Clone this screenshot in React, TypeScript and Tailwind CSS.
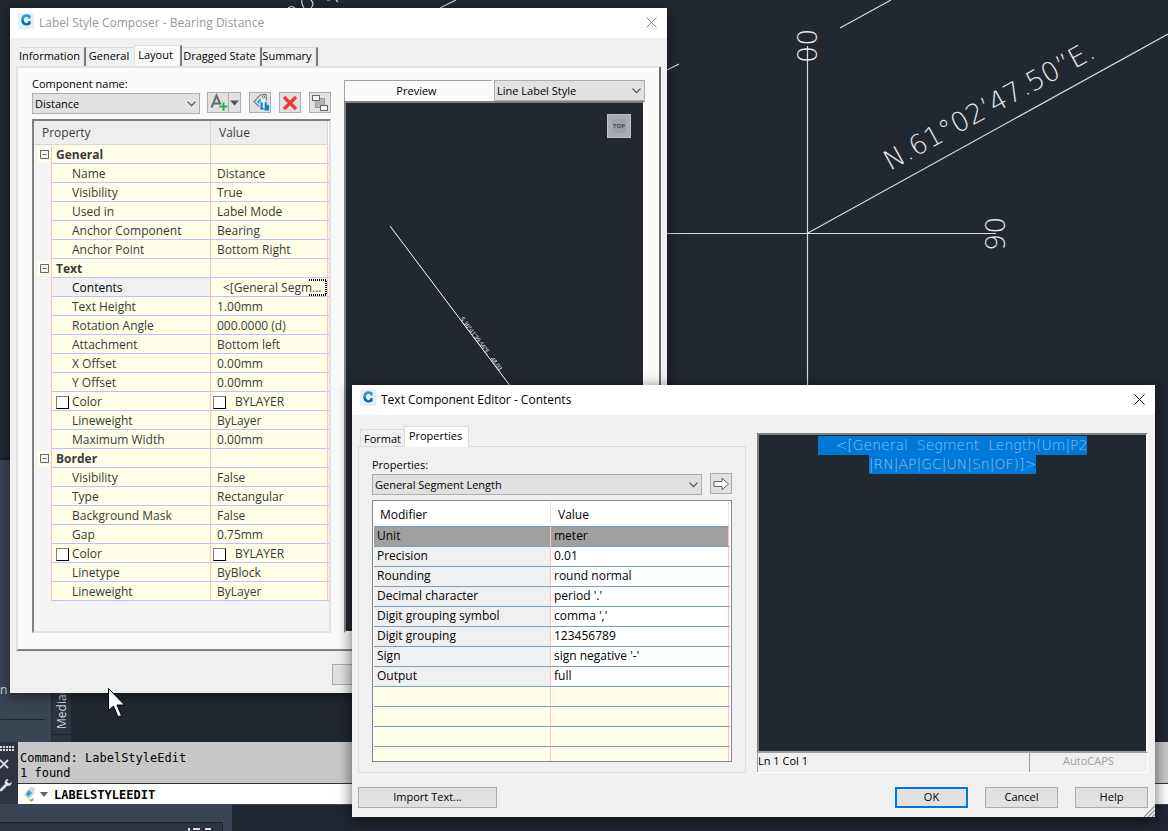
import React from 'react';

type Row = {
    name: string;
    value?: string;
    group?: boolean;
    swatch?: boolean;
    active?: boolean;
};

const styleRows: Row[] = [
    { name: 'General', group: true },
    { name: 'Name', value: 'Distance' },
    { name: 'Visibility', value: 'True' },
    { name: 'Used in', value: 'Label Mode' },
    { name: 'Anchor Component', value: 'Bearing' },
    { name: 'Anchor Point', value: 'Bottom Right' },
    { name: 'Text', group: true },
    { name: 'Contents', value: '<[General Segm...', active: true },
    { name: 'Text Height', value: '1.00mm' },
    { name: 'Rotation Angle', value: '000.0000 (d)' },
    { name: 'Attachment', value: 'Bottom left' },
    { name: 'X Offset', value: '0.00mm' },
    { name: 'Y Offset', value: '0.00mm' },
    { name: 'Color', value: 'BYLAYER', swatch: true },
    { name: 'Lineweight', value: 'ByLayer' },
    { name: 'Maximum Width', value: '0.00mm' },
    { name: 'Border', group: true },
    { name: 'Visibility', value: 'False' },
    { name: 'Type', value: 'Rectangular' },
    { name: 'Background Mask', value: 'False' },
    { name: 'Gap', value: '0.75mm' },
    { name: 'Color', value: 'BYLAYER', swatch: true },
    { name: 'Linetype', value: 'ByBlock' },
    { name: 'Lineweight', value: 'ByLayer' },
];

const modifiers = [
    ['Unit', 'meter'],
    ['Precision', '0.01'],
    ['Rounding', 'round normal'],
    ['Decimal character', "period '.'"],
    ['Digit grouping symbol', "comma ','"],
    ['Digit grouping', '123456789'],
    ['Sign', "sign negative '-'"],
    ['Output', 'full'],
];

const AppLogo = () => (
    <svg className="mb-1 size-4 shrink-0" viewBox="0 0 16 16" aria-hidden="true">
        <rect width="16" height="16" fill="#e3f1fb" />
        <path d="M11.3 5.500V3.300C9.300 2.200 4.600 1.600 4.600 7c0 4.600 4.400 4.900 6.700 3.400V8.300" fill="none" stroke="#2a94cf" strokeWidth="2.600" />
        <path d="M4.600 7.500c.2 4 4.400 4.400 6.700 2.900V8.300" fill="none" stroke="#126aa3" strokeWidth="2.200" />
    </svg>
);

const CloseIcon = ({ className }: { className: string }) => (
    <svg className={className} width="11" height="11" viewBox="0 0 11 11" aria-hidden="true">
        <path d="M.5.5l10 10M10.500.5l-10 10" stroke="currentColor" fill="none" />
    </svg>
);

const Swatch = () => (
    <span className="block size-[13px] shrink-0 border border-t-[#808080] border-l-[#808080] border-r-black border-b-black bg-white" />
);

const Select = ({ label, value, className }: { label: string; value: string; className: string }) => (
    <div className={`relative ${className}`}>
        <select
            id={label}
            aria-label={label}
            defaultValue={value}
            className="block h-[21px] w-full appearance-none border border-[#adadad] bg-[#e1e1e1] pl-[2px] text-[11px] leading-[19px] text-black"
        >
            <option>{value}</option>
        </select>
        <svg className="pointer-events-none absolute top-2 right-1" width="9" height="6" viewBox="0 0 9 6" aria-hidden="true">
            <path d="M.5.7l4 4 4-4" fill="none" stroke="#505050" strokeWidth="1.200" />
        </svg>
    </div>
);

const iconButton = 'flex h-[21px] items-center justify-center border border-[#adadad] bg-[#e1e1e1]';

const Toolbar = () => (
    <div className="-mt-px flex gap-2">
        <div className="flex">
            <button type="button" aria-label="Create text component" className={`${iconButton} w-[22px]`}>
                <svg className="shrink-0" width="19" height="19" viewBox="0 0 19 19">
                    <path d="M2.500 14.500L7.500 2.500l4 9M4.500 10.500h6" fill="none" stroke="#6a6a6a" strokeWidth="2" />
                    <path d="M14.500 9.500v8M10.500 13.500h8" stroke="#22b14c" strokeWidth="2" />
                </svg>
            </button>
            <button type="button" aria-label="More components" className={`${iconButton} w-3 border-l-0`}>
                <svg className="shrink-0" width="9" height="6" viewBox="0 0 9 6"><path d="M0 .5h9L4.500 5.500z" fill="#555" /></svg>
            </button>
        </div>
        <button type="button" aria-label="Copy component" className={`${iconButton} w-[22px]`}>
            <svg className="shrink-0" width="19" height="19" viewBox="0 0 19 19">
                <path d="M8.500 14L3 8.500 9.500 2l5.500-.5.5 6" fill="#f2f2f2" stroke="#777" strokeWidth="1.200" />
                <circle cx="12.500" cy="4" r="1.200" fill="none" stroke="#777" />
                <path d="M5.500 8.500L10 5v3l1.500 1.500H8.500v2z" fill="#3aa5ea" />
                <path d="M9 9h3v5.500h2V17H9z" fill="#1a86d8" stroke="#fff" strokeWidth=".6" />
                <path d="M13.500 8.500h2.500v3h2.500V18h-5.500z" fill="#1a7fd4" stroke="#fff" strokeWidth=".6" />
            </svg>
        </button>
        <button type="button" aria-label="Delete component" className={`${iconButton} w-[22px]`}>
            <svg className="shrink-0" width="16" height="16" viewBox="0 0 16 16">
                <path d="M2 2l12 12M14 2L2 14" stroke="#f23535" strokeWidth="3.200" />
            </svg>
        </button>
        <button type="button" aria-label="Component draw order" className={`${iconButton} w-[22px]`}>
            <svg className="shrink-0" width="18" height="18" viewBox="0 0 18 18">
                <path d="M4.500 4.500h9v9h-9z" fill="#b4b4b4" stroke="#999" />
                <rect x="1.500" y="1.500" width="7" height="5" fill="#f4f4f4" stroke="#666" />
                <rect x="9.500" y="11.500" width="7" height="5" fill="#f4f4f4" stroke="#666" />
            </svg>
        </button>
    </div>
);

const StyleTable = () => (
    <table className="w-full table-fixed border-separate border-spacing-0 text-left text-[12px] leading-4 text-[#3a3a3a]">
        <colgroup>
            <col className="w-[18px]" />
            <col className="w-[159px]" />
            <col />
            <col className="w-px" />
        </colgroup>
        <thead>
            <tr className="h-6 bg-[#eeeeee]">
                <th colSpan={2} className="border-r border-b border-[#d8d8d8] pl-2 font-normal">Property</th>
                <th className="border-r border-b border-[#d8d8d8] pl-2 font-normal">Value</th>
                <td className="bg-white p-0" />
            </tr>
        </thead>
        <tbody>
            {styleRows.map((row, i) => (
                <tr key={i} className="h-[19px]">
                    <td className="border-r border-[#ffc0c0] p-0 pl-1">
                        {row.group && (
                            <button type="button" aria-label={`Collapse ${row.name}`} className="flex h-[15px] w-[13px] items-center justify-center bg-[#ffffe8]">
                                <svg width="9" height="9" viewBox="0 0 9 9">
                                    <path d="M.5.5h8v8h-8zM2.500 4.500h4" fill="#f4f4f4" stroke="#666" />
                                </svg>
                            </button>
                        )}
                    </td>
                    <td className={`border-r border-b border-r-[#ffc0c0] border-b-[#c0c0ff] p-0 pt-[2px] pl-1 ${row.active ? 'bg-[#f0f0f0] text-black' : 'bg-[#ffffe8]'}`}>
                        <div className="flex items-center">
                            {row.swatch && <Swatch />}
                            <span className={row.group ? 'font-bold' : row.swatch ? 'pl-[3px]' : 'pl-4'}>{row.name}</span>
                        </div>
                    </td>
                    <td className="border-r border-b border-r-[#ffc0c0] border-b-[#c0c0ff] bg-[#ffffe8] p-0 pt-[2px]">
                        <div className="relative flex items-center">
                            {row.swatch && <span className="pl-[2px]"><Swatch /></span>}
                            <span className={row.swatch ? 'pl-[9px]' : row.active ? 'pl-3 whitespace-nowrap' : 'pl-[6px]'}>{row.value}</span>
                            {row.active && (
                                <button type="button" aria-label="Edit contents" className="absolute -top-px right-0 h-[17px] w-[18px]">
                                    <svg className="block" width="18" height="17" viewBox="0 0 18 17">
                                        <path d="M0 1h17v15H0" fill="none" stroke="#000" strokeWidth="2" strokeDasharray="1 1" />
                                    </svg>
                                </button>
                            )}
                        </div>
                    </td>
                    <td className="border-b border-[#c0c0ff] bg-[#f4f4f4] p-0" />
                </tr>
            ))}
        </tbody>
    </table>
);

const ComposerWindow = () => (
    <section aria-label="Label Style Composer" className="absolute top-2 left-[10px] flex w-[657px] flex-col bg-[#f0f0f0] pb-2 shadow-[0_3px_12px_rgba(0,0,0,0.5)]">
        <header className="flex h-[30px] items-center bg-white pr-[10px] pl-2 text-[12px] text-[#999999]">
            <AppLogo />
            <h1 className="flex-1 pl-[5px]">Label Style Composer - Bearing Distance</h1>
            <button type="button" aria-label="Close composer" className="mb-[2px]"><CloseIcon className="text-[#888888]" /></button>
        </header>

        <div className="px-[6px] pt-[7px] text-[11px] text-black">
            <div role="tablist" className="flex h-[21px] items-end pl-[3px] leading-4">
                <button type="button" role="tab" className="h-[19px] w-[67px] border-t border-r-2 border-t-[#dcdcdc] border-r-[#777777] pr-[6px] pb-[2px]">Information</button>
                <button type="button" role="tab" className="h-[19px] w-[48px] border-t border-[#dcdcdc] pr-[2px] pb-[2px]">General</button>
                <button type="button" role="tab" aria-selected="true" className="h-[21px] w-[48px] border-t border-r-2 border-l border-t-[#dcdcdc] border-r-[#777777] border-l-[#dcdcdc] bg-[#fafafa] pr-1 pb-[2px]">Layout</button>
                <button type="button" role="tab" className="h-[19px] w-[80px] border-t border-r-2 border-t-[#dcdcdc] border-r-[#777777] pr-[3px] pb-[2px]">Dragged State</button>
                <button type="button" role="tab" className="h-[19px] w-[56px] border-t border-r-2 border-t-[#dcdcdc] border-r-[#777777] pr-1 pb-[2px]">Summary</button>
            </div>

            <div className="flex gap-[13px] border-2 border-t-[#e3e3e3] border-r-[#696969] border-b-[#808080] border-l-[#e3e3e3] bg-[#fafafa] px-[14px] pt-2 pb-4">
                <div className="w-[299px]">
                    <label htmlFor="Component name" className="block pb-[2px] leading-[15px]">Component name:</label>
                    <div className="flex gap-[7px]">
                        <Select label="Component name" value="Distance" className="w-[168px]" />
                        <Toolbar />
                    </div>
                    <div className="mt-[5px] h-[514px] border-2 border-t-[#808080] border-r-[#e3e3e3] border-b-[#e3e3e3] border-l-[#808080] bg-[#f4f4f4]">
                        <StyleTable />
                    </div>
                </div>

                <div className="flex flex-1 flex-col pt-1">
                    <div className="flex gap-[2px]">
                        <div className="h-[21px] flex-1 border-t border-l border-[#a0a0a0] pr-1 text-center leading-[20px]">Preview</div>
                        <Select label="Preview type" value="Line Label Style" className="w-[151px]" />
                    </div>
                    <div className="relative flex-1 border-2 border-t-[#808080] border-r-white border-b-white border-l-[#808080] bg-[#222830]">
                        <button type="button" className="absolute top-[11px] right-3 flex size-6 items-center justify-center border border-[#c0c0c0] bg-[#a9abad] text-[6px] font-bold text-[#444c58]">
                            <span className="bg-[#9aa3ab] px-px leading-[14px]">TOP</span>
                        </button>
                        <svg className="absolute top-[120px] left-10" width="130" height="170" viewBox="0 0 130 170">
                            <path d="M4 3l124 165" stroke="#fff" fill="none" />
                            <text transform="translate(74 96) rotate(53)" fontSize="6" fill="#fff" xmlSpace="preserve">S.36°41'39.56"E.   48.03</text>
                        </svg>
                    </div>
                </div>
            </div>
        </div>

        <div className="flex px-2 pt-[13px]">
            <button type="button" aria-label="Apply" className="ml-[314px] h-[21px] w-[73px] border border-[#adadad] bg-[#e1e1e1]" />
        </div>
    </section>
);

const pushButton = 'h-[21px] border border-[#adadad] bg-[#e1e1e1] text-center';

const EditorWindow = () => (
    <section aria-label="Text Component Editor" className="absolute top-[385px] left-[352px] w-[803px] bg-[#f0f0f0] pb-[9px] text-[11px] text-black shadow-[0_3px_14px_rgba(0,0,0,0.6)]">
        <header className="flex h-[30px] items-center bg-white pr-[10px] pl-2 text-[12px]">
            <AppLogo />
            <h1 className="flex-1 pl-[5px]">Text Component Editor - Contents</h1>
            <button type="button" aria-label="Close editor" className="mb-[2px]"><CloseIcon className="text-black" /></button>
        </header>

        <div className="flex gap-[11px] pt-[11px] pr-[7px] pl-[6px]">
            <div className="w-[388px]">
                <div role="tablist" className="relative -mb-px flex h-[21px] items-end pl-[2px]">
                    <button type="button" role="tab" className="h-[18px] w-[44px] border border-r-0 border-b-0 border-[#dcdcdc] leading-4">Format</button>
                    <button type="button" role="tab" aria-selected="true" className="h-[21px] w-[65px] border border-b-0 border-[#dcdcdc] bg-white pr-[2px] pb-[2px] leading-4">Properties</button>
                </div>
                <div className="border border-[#dcdcdc] px-[13px] pt-[10px] pb-[10px]">
                    <label htmlFor="Properties" className="block leading-4">Properties:</label>
                    <div className="flex gap-2 pt-px">
                        <Select label="Properties" value="General Segment Length" className="flex-1" />
                        <button type="button" aria-label="Insert property" className={`${iconButton} -mt-px w-[22px]`}>
                            <svg className="shrink-0" width="17" height="14" viewBox="0 0 17 14">
                                <path d="M1 4.500h8V1.200L15.500 7 9 12.800V9.500H1z" fill="#f4f4f4" stroke="#666" />
                            </svg>
                        </button>
                    </div>
                    <div className="mt-[5px] h-[262px] overflow-hidden border border-[#828790] bg-white p-px">
                        <table className="w-full table-fixed border-separate border-spacing-0 text-left text-[12px] leading-[17px]">
                            <colgroup>
                                <col className="w-[177px]" />
                                <col />
                                <col className="w-px" />
                            </colgroup>
                            <thead>
                                <tr className="h-[25px]">
                                    <th className="border-r border-b border-r-[#e5e5e5] border-b-[#7b9ebd] p-0 pl-[6px] font-normal">Modifier</th>
                                    <th className="border-r border-b border-r-[#e5e5e5] border-b-[#7b9ebd] p-0 pl-[7px] font-normal">Value</th>
                                    <td className="p-0" />
                                </tr>
                            </thead>
                            <tbody>
                                {modifiers.map(([name, value], i) => (
                                    <tr key={name} className={i === 0 ? 'h-5 bg-[#a0a0a0]' : 'h-5'}>
                                        <td className={`border-r border-b border-r-[#ffc0c0] border-b-[#7b9ebd] p-0 pb-[2px] pl-[3px] ${i === 0 ? '' : 'bg-[#f0f0f0]'}`}>{name}</td>
                                        <td className="border-r border-b border-r-[#ffc0c0] border-b-[#7b9ebd] p-0 pb-[2px] pl-[3px]">{value}</td>
                                        <td className="border-b border-[#7b9ebd] bg-white p-0" />
                                    </tr>
                                ))}
                                {[0, 1, 2, 3].map((i) => (
                                    <tr key={i} className="h-5 bg-[#ffffe8]">
                                        <td className="border-r border-b border-r-[#ffc0c0] border-b-[#7b9ebd] p-0" />
                                        <td className="border-r border-b border-r-[#ffc0c0] border-b-[#7b9ebd] p-0" />
                                        <td className="border-b border-[#7b9ebd] bg-white p-0" />
                                    </tr>
                                ))}
                            </tbody>
                        </table>
                    </div>
                </div>
            </div>

            <div className="flex flex-1 flex-col pt-[7px]">
                <div role="textbox" aria-label="Contents" className="flex flex-1 flex-col items-center border-2 border-t-[#808080] border-r-white border-b-[#a0a0a0] border-l-[#808080] bg-[#222830] pt-px font-['DejaVu_Sans'] text-[14px] leading-[19px] font-extralight text-[#8fc4f2]">
                    <span className="bg-[#0078d7] pl-[18px] whitespace-pre">{'<[General  Segment  Length(Um|P2'}</span>
                    <span className="bg-[#0078d7] whitespace-pre">{'|RN|AP|GC|UN|Sn|OF)]>'}</span>
                </div>
                <div className="flex h-5 border-r border-b border-white leading-[15px]">
                    <span className="w-[272px] border-l border-[#a0a0a0]">Ln 1 Col 1</span>
                    <span className="flex-1 border-l border-[#a0a0a0] text-center text-[#a0a0a0]">AutoCAPS</span>
                </div>
            </div>
        </div>

        <div className="flex gap-[17px] pt-[14px] pr-[7px] pl-[6px]">
            <button type="button" className={`${pushButton} mr-auto w-[139px]`}>Import Text...</button>
            <button type="button" className="h-[21px] w-[73px] border-2 border-[#0078d7] bg-[#e1e1e1] text-center">OK</button>
            <button type="button" className={`${pushButton} w-[73px]`}>Cancel</button>
            <button type="button" className={`${pushButton} w-[73px]`}>Help</button>
        </div>
        <svg className="absolute right-0 bottom-0" width="12" height="12" viewBox="0 0 12 12" aria-hidden="true">
            <path d="M1 12L12 1M5 12l7-7M9 12l3-3" stroke="#909090" strokeWidth="1.200" />
        </svg>
    </section>
);

const Drawing = () => (
    <svg className="absolute top-0 left-0" width="1168" height="460" viewBox="0 0 1168 460" fill="none" stroke="#d8dadc">
        <path d="M807.500 46v390M660 233.500h336" strokeWidth="1.200" />
        <path d="M807 233.500L1168 34M840 28l51-28M667 70l12-6M440 8l16-8" strokeWidth="1.200" />
        <path d="M288 8c2-2 5-2 7 0M302 0c-1 3 0 5 2 8M311 0c3 3 2 6 0 8M327 0h3M336 0l2 2" strokeWidth="1.200" />
        <g stroke="none" fill="#e6e8ea" fontFamily="DejaVu Sans" fontWeight="200">
            <text transform="translate(890 171) rotate(-28.900)" fontSize="27">N.61°02’47.50”E.</text>
            <text transform="translate(817 63) rotate(-90)" fontSize="27">00</text>
            <text transform="translate(1005 251) rotate(-90)" fontSize="27">90</text>
        </g>
    </svg>
);

const CommandLine = () => (
    <div className="flex h-[62px] font-['DejaVu_Sans_Mono'] text-[12px] text-black">
        <div className="flex w-[18px] flex-col items-start gap-2 bg-[#2d3340] pt-1 text-[#dddddd]">
            <svg width="15" height="5" viewBox="0 0 15 5"><path d="M0 1h15M0 4h15" stroke="#ddd" strokeWidth="2" strokeDasharray="2 1" /></svg>
            <button type="button" aria-label="Close command line">
                <svg className="block" width="10" height="10" viewBox="0 0 10 10"><path d="M0 1l8 8M8 1L0 9" stroke="currentColor" strokeWidth="1.800" /></svg>
            </button>
            <button type="button" aria-label="Customize">
                <svg className="block" width="12" height="16" viewBox="0 0 12 16">
                    <path d="M0 12l5-5c-1-3 1-5 3.500-5L7 4.500l2 2L11.800 5c0 3-2 4.500-4.800 4L1.500 14.500 0 14z" fill="currentColor" />
                </svg>
            </button>
        </div>
        <div className="flex flex-1 flex-col">
            <div className="flex-1 border-b border-[#2d3340] bg-[#c8c8c8] pt-[9px] pl-[2px] leading-[15px]">
                <p>Command: LabelStyleEdit</p>
                <p>1 found</p>
            </div>
            <div className="flex h-5 items-center bg-white pl-[5px]">
                <svg width="13" height="17" viewBox="0 0 13 17" aria-hidden="true">
                    <path d="M1 9L7 1l5 1-1 6-5 6z" fill="#d5d9dc" />
                    <path d="M3 8l3-4 3 3-4 4z" fill="#2f9fe6" />
                    <path d="M6 14l4-2 1 2-3 2z" fill="#e0a050" />
                </svg>
                <svg className="ml-1" width="8" height="5" viewBox="0 0 8 5" aria-hidden="true"><path d="M0 0h8L4 5z" fill="#666" /></svg>
                <input aria-label="Command" defaultValue="LABELSTYLEEDIT" className="ml-[6px] min-w-0 flex-1 pt-[2px] font-bold outline-none" />
            </div>
        </div>
    </div>
);

const App = () => {
    return (
        <main className="relative flex h-screen flex-col overflow-hidden bg-[#222830] font-['Open_Sans',sans-serif]">
            <Drawing />
            <div className="flex flex-1 items-end">
                <div className="flex h-[284px] border-t-2 border-[#1c212b] text-[12px] text-[#d5d8dc]">
                    <div className="flex w-[52px] flex-col border-r border-[#222833] bg-[#3b4453]">
                        <span className="mt-[221px] leading-[18px]">n</span>
                        <span className="mt-5 mr-[6px] border-t border-[#222833]" />
                    </div>
                    <div className="flex w-[19px] flex-col justify-end bg-[#2d3340]">
                        <span className="mb-[5px] rotate-180 text-left leading-[19px] [writing-mode:vertical-rl]">Median</span>
                        <span className="h-2 border-t border-[#1c212b]" />
                    </div>
                </div>
            </div>
            <CommandLine />
            <div className="flex h-[27px] border-t border-[#3b4453] bg-[#1f2630]">
                <div className="flex w-[234px] items-end border-r-2 border-[#222833] bg-[#3b4453]">
                    <div className="flex h-[9px] w-[223px] justify-end border-t border-r border-[#1c212b] bg-[#2d3340] pt-[5px] pr-[10px]">
                        <svg width="24" height="3" viewBox="0 0 24 3"><path d="M1 0v3M5 1h7M17 1h6" stroke="#ddd" strokeWidth="2" /></svg>
                    </div>
                </div>
            </div>
            <ComposerWindow />
            <EditorWindow />
            <svg className="absolute top-[687px] left-[107px]" width="20" height="32" viewBox="0 0 20 32" aria-hidden="true">
                <path d="M1.500 1.500v22l5-4.500 4.500 11 3.500-1.500L10 18h7.500z" fill="#fff" stroke="#000" />
            </svg>
        </main>
    );
};

export default App;
